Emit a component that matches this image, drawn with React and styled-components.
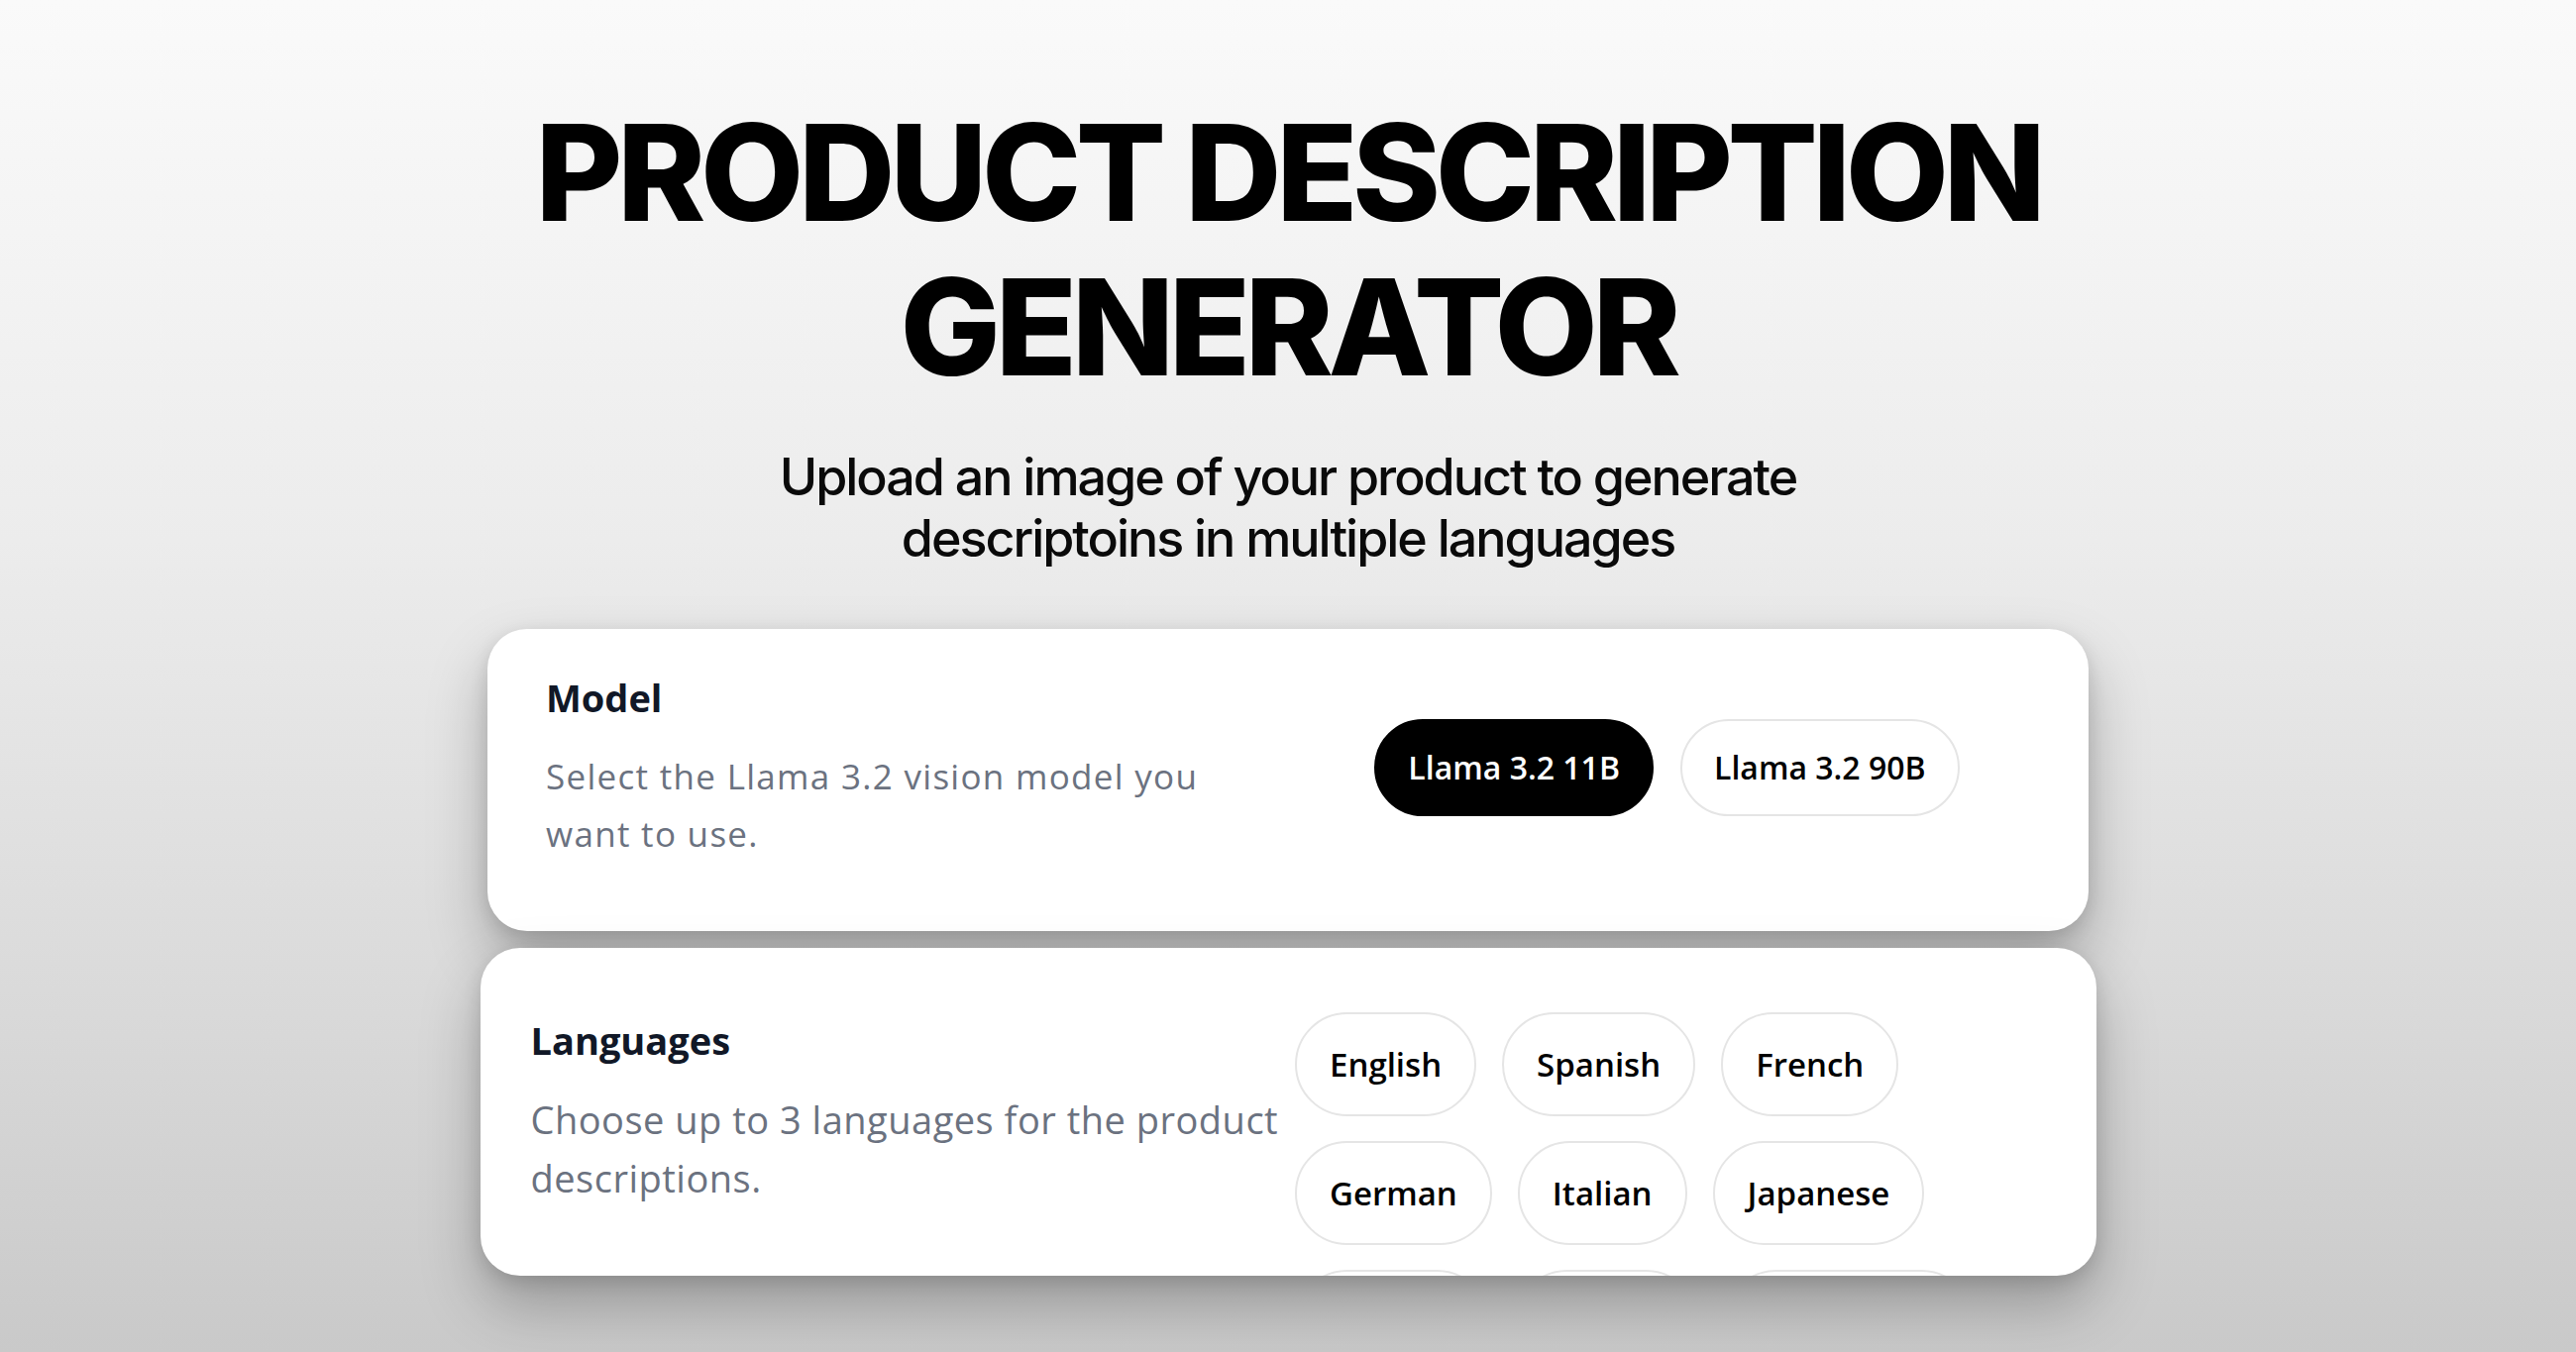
import React from "react";
import styled, { createGlobalStyle } from "styled-components";

const GlobalStyle = createGlobalStyle`
  html, body {
    margin: 0;
    padding: 0;
  }
  body {
    min-height: 100vh;
    background: linear-gradient(180deg, #fafafa 0%, #ececec 40%, #d9d9d9 75%, #c9c9c9 100%);
    font-family: "Inter", "Liberation Sans", sans-serif;
  }
  * { box-sizing: border-box; }
`;

const Page = styled.main`
  min-height: 1365px;
  display: flex;
  flex-direction: column;
  align-items: center;
  padding-top: 96px;
`;

const Title = styled.h1`
  margin: 0;
  font-family: "Inter", "Liberation Sans", sans-serif;
  font-weight: 800;
  font-size: 135px;
  line-height: 156px;
  letter-spacing: -0.04em;
  color: #000;
  text-align: center;
  text-transform: uppercase;
`;

const Subtitle = styled.p`
  margin: 43px 0 0;
  max-width: 1090px;
  font-family: "Inter", "Liberation Sans", sans-serif;
  font-weight: 500;
  font-size: 52px;
  line-height: 62px;
  letter-spacing: -0.039em;
  color: #0a0a0a;
  text-align: center;
`;

const Stack = styled.div`
  margin-top: 60px;
  display: flex;
  flex-direction: column;
  align-items: center;
  gap: 17px;
`;

const Card = styled.section`
  width: ${(p) => p.$width}px;
  height: ${(p) => (p.$height ? `${p.$height}px` : "auto")};
  overflow: hidden;
  padding: ${(p) => p.$padding};
  background: #fff;
  border-radius: 40px;
  box-shadow: 0 30px 60px rgba(0, 0, 0, 0.26), 0 6px 18px rgba(0, 0, 0, 0.12);
  display: grid;
  grid-template-columns: 1fr 1fr;
  column-gap: ${(p) => p.$gap}px;
  align-items: ${(p) => p.$align};
  font-family: "Open Sans", "Noto Sans", sans-serif;
`;

const Info = styled.div`
  display: flex;
  flex-direction: column;
`;

const Heading = styled.h2`
  margin: 0;
  font-size: 38px;
  font-weight: 700;
  line-height: ${(p) => p.$lh}px;
  color: #111827;
`;

const Description = styled.p`
  margin: ${(p) => p.$gapTop}px 0 0;
  max-width: ${(p) => p.$maxWidth}px;
  font-size: ${(p) => p.$size}px;
  line-height: ${(p) => p.$lh}px;
  letter-spacing: ${(p) => p.$ls}px;
  color: #6b7280;
  font-weight: 400;
`;

const Options = styled.div`
  display: flex;
  flex-wrap: wrap;
  justify-content: ${(p) => p.$justify};
  gap: ${(p) => p.$rowGap}px ${(p) => p.$colGap}px;
`;

const Pill = styled.button`
  font-family: "Open Sans", "Noto Sans", sans-serif;
  font-weight: 600;
  font-size: ${(p) => p.$size}px;
  line-height: ${(p) => p.$lh}px;
  padding: ${(p) => p.$pad};
  border-radius: 999px;
  border: 2px solid ${(p) => (p.$active ? "#000" : "#e5e5e5")};
  background: ${(p) => (p.$active ? "#000" : "#fff")};
  color: ${(p) => (p.$active ? "#fff" : "#000")};
  white-space: nowrap;
  cursor: pointer;
`;

const languages = [
  "English",
  "Spanish",
  "French",
  "German",
  "Italian",
  "Japanese",
  "Chinese",
  "Korean",
  "Portuguese",
];

export default function App() {
  return (
    <>
      <GlobalStyle />
      <Page>
        <Title>
          Product Description
          <br />
          Generator
        </Title>
        <Subtitle>
          Upload an image of your product to generate descriptoins in multiple
          languages
        </Subtitle>
        <Stack>
          <Card $width={1616} $padding="43px 59px 69px" $gap={32} $align="center">
            <Info>
              <Heading $lh={52}>Model</Heading>
              <Description $gapTop={25} $size={35} $lh={58} $ls={1.3} $maxWidth={700}>
                Select the Llama 3.2 vision model you want to use.
              </Description>
            </Info>
            <Options $justify="center" $rowGap={25} $colGap={27}>
              <Pill $active $size={32} $lh={48} $pad="23px 32px">
                Llama 3.2 11B
              </Pill>
              <Pill $size={32} $lh={48} $pad="23px 32px">
                Llama 3.2 90B
              </Pill>
            </Options>
          </Card>
          <Card
            $width={1631}
            $height={331}
            $padding="65px 51px 0"
            $gap={14}
            $align="start"
          >
            <Info>
              <Heading $lh={56}>Languages</Heading>
              <Description $gapTop={23} $size={38} $lh={59} $ls={0.5} $maxWidth={770}>
                Choose up to 3 languages for the product descriptions.
              </Description>
            </Info>
            <Options $justify="flex-start" $rowGap={25} $colGap={26}>
              {languages.map((l) => (
                <Pill key={l} $size={33} $lh={49} $pad="26px 33px">
                  {l}
                </Pill>
              ))}
            </Options>
          </Card>
        </Stack>
      </Page>
    </>
  );
}
